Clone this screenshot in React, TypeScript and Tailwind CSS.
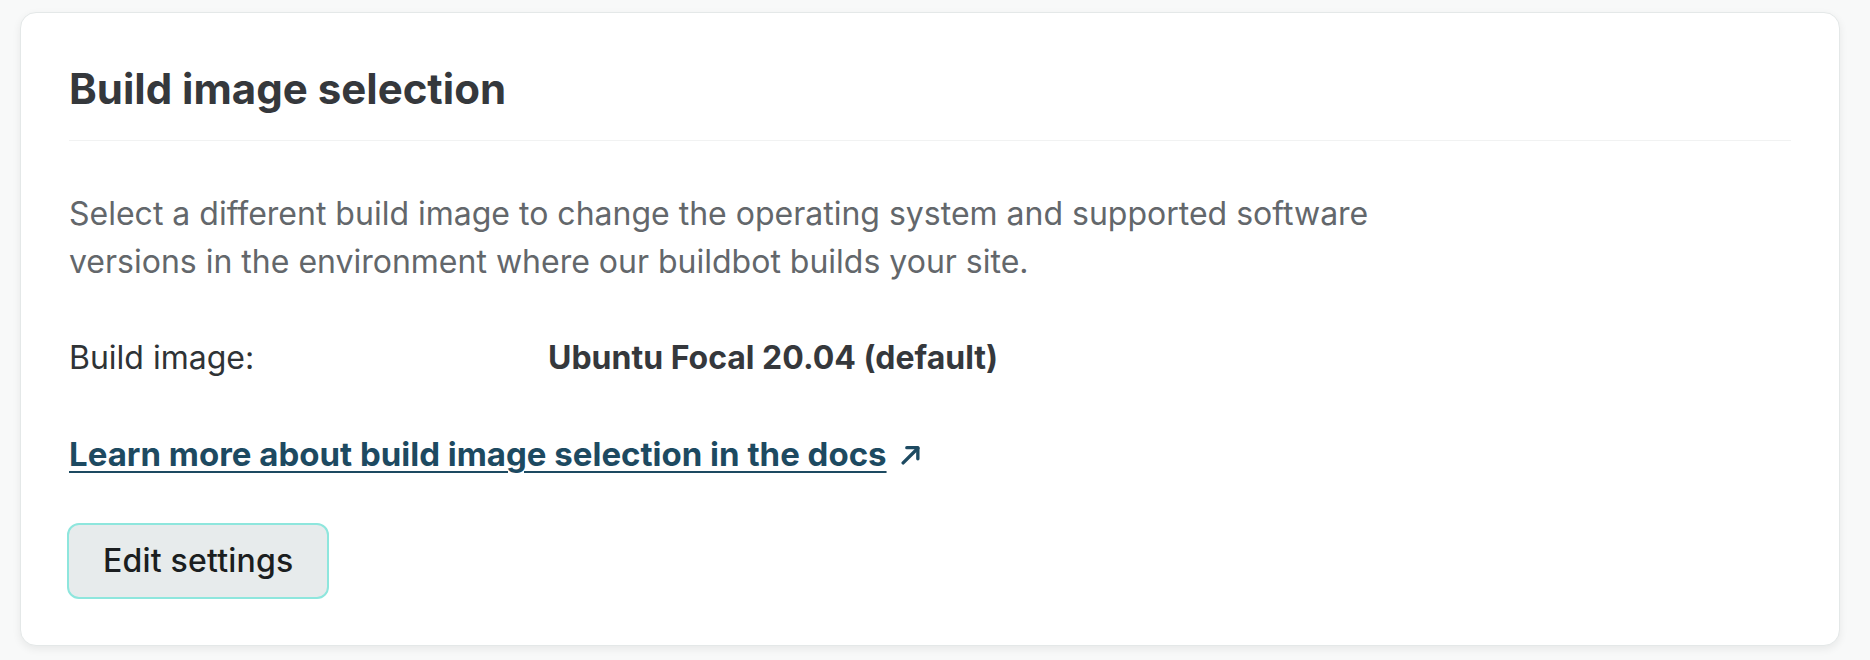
import React from "react";

function ExternalArrow() {
  return (
    <svg width="21" height="21" viewBox="0 0 20 20" fill="none" className="inline-block">
      <path d="M3 18L17 4" stroke="#1d4a61" strokeWidth="3.2" strokeLinecap="round" />
      <path d="M6.5 3.5H17V14" stroke="#1d4a61" strokeWidth="3.2" strokeLinecap="round" strokeLinejoin="round" />
    </svg>
  );
}

export default function App() {
  return (
    <div className="w-[1870px] h-[660px] bg-[#f8f9f9] pt-[12px] pl-[20px] font-['Inter',sans-serif]">
      <section className="w-[1820px] bg-white border border-[#e4e8e8] rounded-[16px] shadow-[0_3px_8px_rgba(0,0,0,0.07)] pt-[49px] pb-[46px] px-[48px]">
        <div className="pb-[25px] border-b border-[#f1f2f2]">
          <h2 className="text-[42px] leading-[53px] font-bold text-[#35383c]">Build image selection</h2>
        </div>

        <p className="mt-[49px] max-w-[1320px] text-[32px] leading-[48px] text-[#63676b]">
          Select a different build image to change the operating system and supported software versions in the environment where our buildbot builds your site.
        </p>

        <div className="mt-[48px] grid grid-cols-[479px_1fr] text-[32px] leading-[48px]">
          <span className="text-[#2f3336]">Build image:</span>
          <span className="font-bold text-[#35383c]">Ubuntu Focal 20.04 (default)</span>
        </div>

        <div className="mt-[48px] flex items-center gap-[13px] text-[33px] leading-[48px]">
          <a href="#" className="font-bold text-[#1d4a61] underline decoration-2 underline-offset-[5px]">
            Learn more about build image selection in the docs
          </a>
          <ExternalArrow />
        </div>

        <button className="mt-[45px] -ml-[2px] rounded-[12px] border-2 border-[#8ee6dd] bg-[#e7ebec] px-[34px] py-[12px] text-[32px] leading-[48px] font-medium tracking-[0.2px] text-[#1b1e20]">
          Edit settings
        </button>
      </section>
    </div>
  );
}
